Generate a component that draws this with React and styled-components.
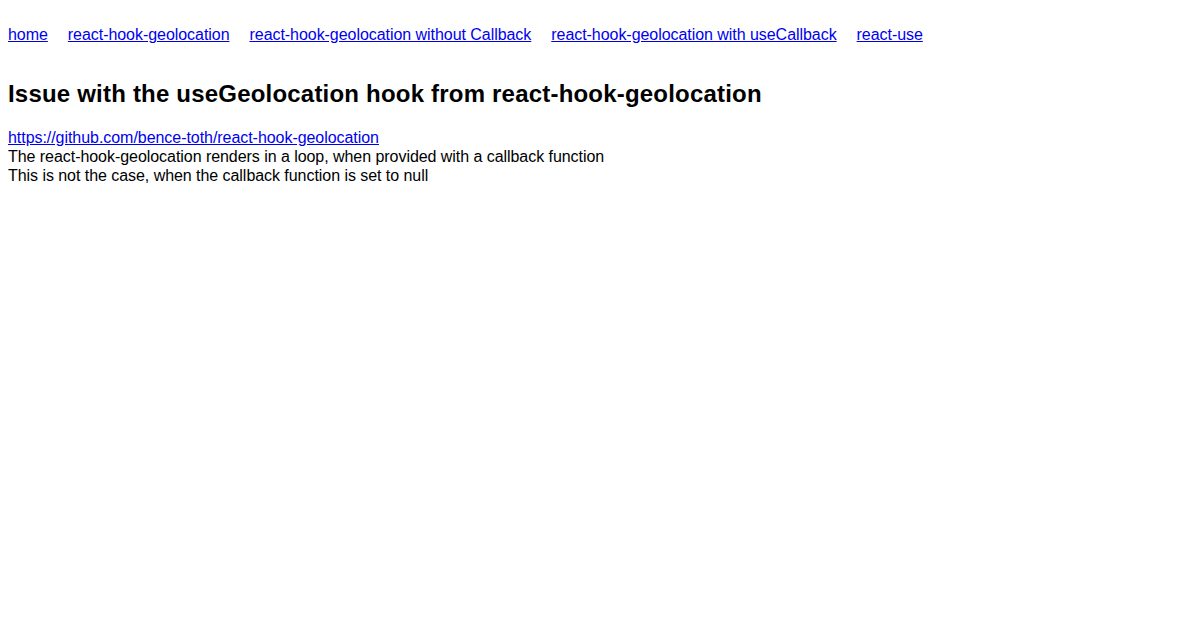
import styled, { createGlobalStyle } from 'styled-components';

const GlobalStyle = createGlobalStyle`
  body {
    margin: 8px;
    background: #ffffff;
    color: #000000;
    font-family: 'Liberation Sans', Arial, sans-serif;
    font-size: 16px;
  }
`;

const Nav = styled.nav`
  display: flex;
  gap: 20px;
  padding-top: 17px;
  line-height: 19px;
  letter-spacing: -0.05px;
`;

const Link = styled.a`
  color: #0000ee;
  text-decoration: underline;
`;

const Title = styled.h2`
  font-size: 24px;
  font-weight: bold;
  letter-spacing: 0.2px;
  margin: 36px 0 20px;
`;

const Line = styled.div`
  line-height: 19px;
  letter-spacing: -0.05px;
`;

const links = [
  'home',
  'react-hook-geolocation',
  'react-hook-geolocation without Callback',
  'react-hook-geolocation with useCallback',
  'react-use',
];

export default function App() {
  return (
    <>
      <GlobalStyle />
      <Nav>
        {links.map((l) => (
          <Link key={l} href="#">{l}</Link>
        ))}
      </Nav>
      <Title>Issue with the useGeolocation hook from react-hook-geolocation</Title>
      <Line>
        <Link href="#">https://github.com/bence-toth/react-hook-geolocation</Link>
      </Line>
      <Line>The react-hook-geolocation renders in a loop, when provided with a callback function</Line>
      <Line>This is not the case, when the callback function is set to null</Line>
    </>
  );
}
